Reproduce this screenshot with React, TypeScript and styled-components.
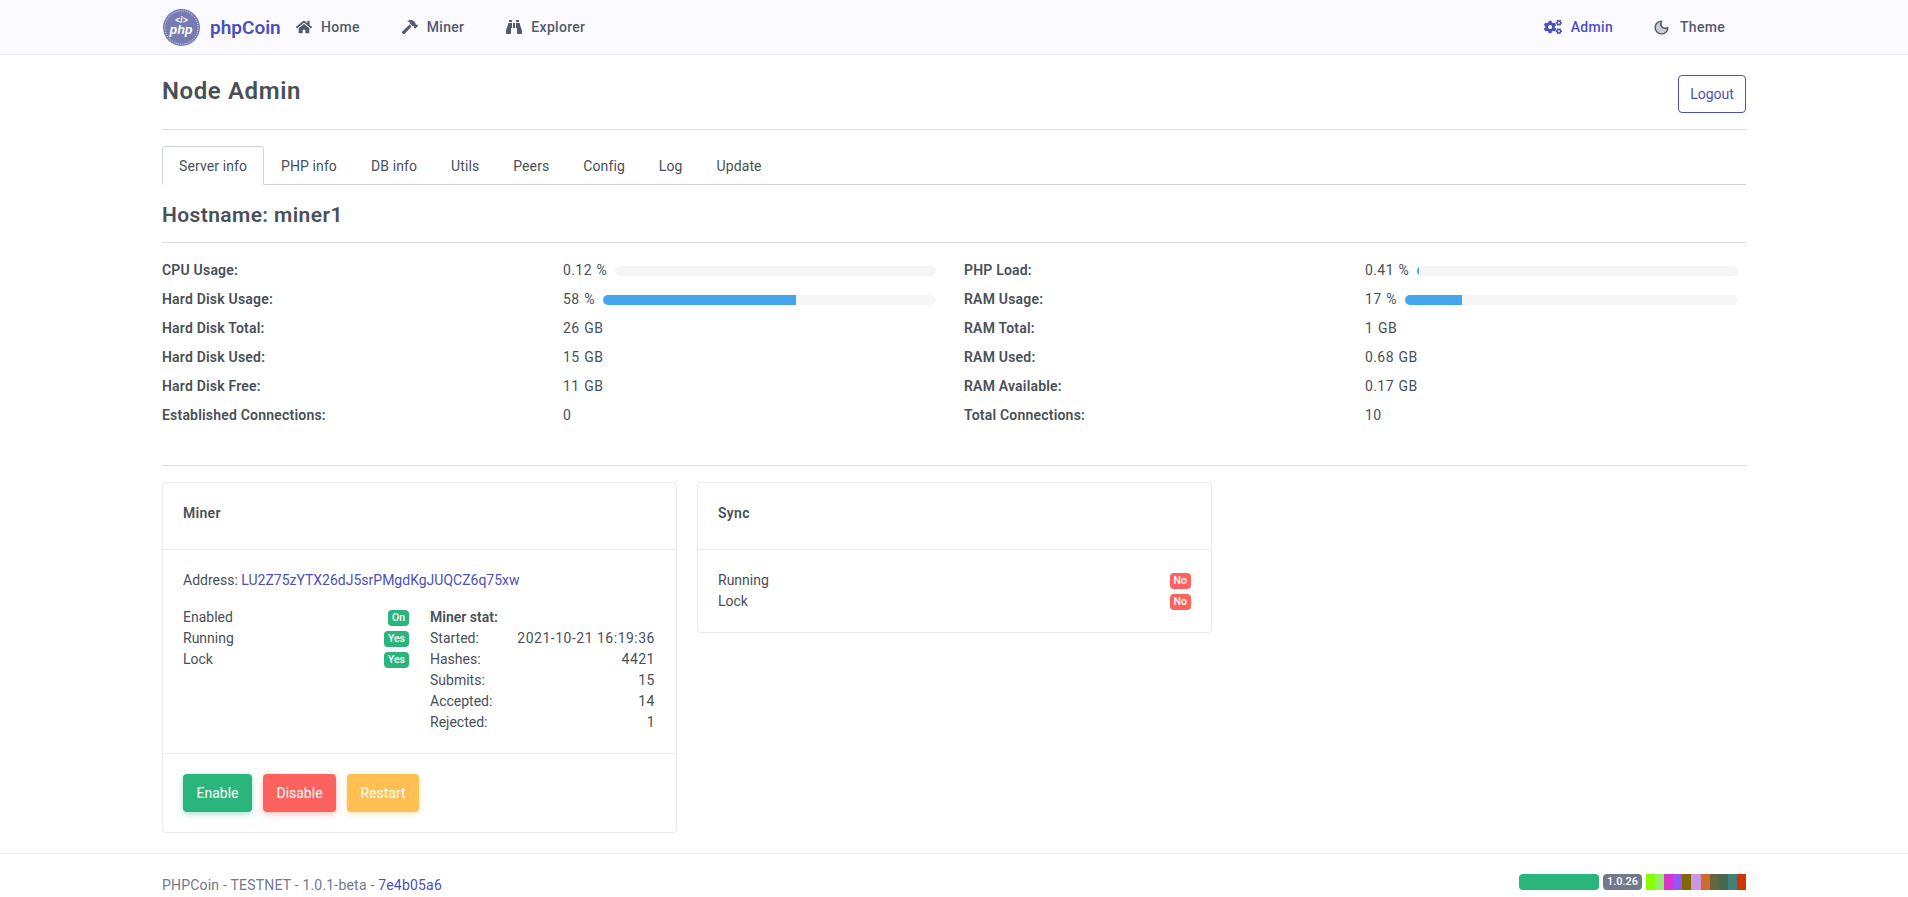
import React from "react";
import styled, { createGlobalStyle } from "styled-components";
import { FaHome, FaHammer, FaBinoculars, FaCogs } from "react-icons/fa";
import { Moon } from "lucide-react";

const GlobalStyle = createGlobalStyle`
  html, body {
    margin: 0;
    padding: 0;
    background: #fff;
    height: 100%;
    overflow: hidden;
  }
  body {
    font-family: Roboto, "Noto Sans", sans-serif;
    font-size: 14px;
    line-height: 21px;
    color: #495057;
  }
  * { box-sizing: border-box; }
`;

const Navbar = styled.nav`
  height: 55px;
  background: #fafaff;
  border-bottom: 1px solid #e9e9ef;
  padding: 0 183px 0 162px;
  display: flex;
  align-items: center;
  justify-content: space-between;
`;

const NavGroup = styled.div<{ $gap: number }>`
  display: flex;
  align-items: center;
  gap: ${(p) => p.$gap}px;
`;

const Brand = styled.a`
  width: 134px;
  margin-right: -42px;
  display: flex;
  align-items: center;
  gap: 10px;
  padding-left: 1px;
  font-size: 19px;
  font-weight: 600;
  color: #4c50bb;
`;

const NavItem = styled.a<{ $active?: boolean; $gap?: number; $icon?: number }>`
  display: flex;
  align-items: center;
  gap: ${(p) => p.$gap ?? 9}px;
  font-size: 14px;
  font-weight: 500;
  letter-spacing: 0.3px;
  color: ${(p) => (p.$active ? "#4c50bb" : "#545a6d")};
  svg { font-size: ${(p) => p.$icon ?? 16}px; }
`;

const Page = styled.main`
  padding: 0 162px;
`;

const Header = styled.div`
  height: 75px;
  padding-top: 20px;
  display: flex;
  justify-content: space-between;
  align-items: flex-start;
  border-bottom: 1px solid #dcdde1;
`;

const Title = styled.h2`
  margin: 1px 0 0;
  font-size: 24px;
  line-height: 30px;
  font-weight: 600;
  letter-spacing: 0.6px;
  color: #495057;
`;

const OutlineButton = styled.button`
  width: 68px;
  height: 38px;
  background: #fff;
  border: 1px solid #4c50bb;
  border-radius: 4px;
  color: #4c50bb;
  font: inherit;
  padding: 0;
`;

const Tabs = styled.div`
  margin-top: 16px;
  height: 39px;
  display: flex;
  border-bottom: 1px solid #ced4da;
`;

const Tab = styled.a<{ $active?: boolean }>`
  height: 39px;
  padding: 1px 16px 0;
  display: flex;
  align-items: center;
  letter-spacing: 0.1px;
  color: #495057;
  border: 1px solid ${(p) => (p.$active ? "#ced4da" : "transparent")};
  border-bottom: 1px solid ${(p) => (p.$active ? "#fff" : "transparent")};
  border-radius: 4px 4px 0 0;
`;

const Hostname = styled.h4`
  margin: 17px 0 0;
  padding-bottom: 14px;
  font-size: 21px;
  line-height: 26px;
  font-weight: 600;
  letter-spacing: 0.4px;
  border-bottom: 1px solid #dcdde1;
`;

const InfoGrid = styled.div`
  display: grid;
  grid-template-columns: 782px 782px;
  column-gap: 20px;
  padding: 13px 0 35px;
  border-bottom: 1px solid #dcdde1;
`;

const InfoColumn = styled.div``;

const InfoRow = styled.div`
  display: flex;
  height: 29px;
  align-items: center;
  padding-right: 8px;
`;

const InfoLabel = styled.div`
  width: 401px;
  flex: none;
  font-weight: 600;
  letter-spacing: 0.2px;
`;

const InfoValue = styled.div`
  flex: 1;
  display: flex;
  align-items: center;
  gap: 8px;
  letter-spacing: 0.4px;
  word-spacing: 0.8px;
`;

const Track = styled.div`
  flex: 1;
  height: 10px;
  background: #f6f6f6;
  border-radius: 5px;
  overflow: hidden;
`;

const Fill = styled.div`
  height: 100%;
  background: #45a5ee;
`;

const Cards = styled.div`
  display: flex;
  align-items: flex-start;
  gap: 20px;
  margin-top: 16px;
`;

const Card = styled.section`
  width: 515px;
  border: 1px solid #e9e9ef;
  border-radius: 4px;
  background: #fff;
`;

const CardHeader = styled.header`
  height: 67px;
  padding: 20px;
  border-bottom: 1px solid #e9e9ef;
  font-weight: 600;
  letter-spacing: 0.3px;
`;

const CardBody = styled.div`
  padding: 20px;
`;

const AddressLine = styled.div`
  margin-bottom: 16px;
`;

const Link = styled.a`
  color: #4c50bb;
`;

const StatusColumns = styled.div`
  display: grid;
  grid-template-columns: 226px 225px;
  column-gap: 21px;
`;

const StatusRow = styled.div`
  display: flex;
  justify-content: space-between;
  align-items: center;
  height: 21px;
`;

const StatLabel = styled.div<{ $strong?: boolean }>`
  font-weight: ${(p) => (p.$strong ? 600 : 400)};
`;

const StatValue = styled.div`
  letter-spacing: 0.5px;
`;

const Badge = styled.span<{ $tone: "green" | "red" }>`
  display: inline-block;
  padding: 0 4px;
  height: 16px;
  line-height: 16px;
  font-size: 10.5px;
  font-weight: 500;
  color: #fff;
  border-radius: 4px;
  background: ${(p) => (p.$tone === "green" ? "#2ab57d" : "#fd625e")};
`;

const CardFooter = styled.footer`
  padding: 20px;
  border-top: 1px solid #e9e9ef;
  display: flex;
  gap: 11px;
`;

const toneColors = {
  green: "#2ab57d",
  red: "#fd625e",
  yellow: "#ffbf53",
};

const ActionButton = styled.button<{ $tone: keyof typeof toneColors; $w: number }>`
  width: ${(p) => p.$w}px;
  height: 38px;
  padding: 0;
  border: none;
  border-radius: 4px;
  font: inherit;
  color: #fff;
  background: ${(p) => toneColors[p.$tone]};
  box-shadow: 0 2px 6px ${(p) => toneColors[p.$tone]}66;
`;

const Footer = styled.footer`
  margin-top: 20px;
  border-top: 1px solid #e9e9ef;
  padding: 20px 162px;
  display: flex;
  justify-content: space-between;
  align-items: flex-start;
  color: #74788d;
`;

const FooterText = styled.div`
  padding-top: 1px;
  letter-spacing: 0.2px;
`;

const Versions = styled.div`
  display: flex;
  align-items: center;
  gap: 4px;
`;

const NodeBar = styled.div`
  width: 80px;
  height: 16px;
  background: #2ab57d;
  border-radius: 4px;
`;

const VersionBadge = styled.span`
  height: 16px;
  width: 39px;
  text-align: center;
  line-height: 16px;
  font-size: 11px;
  font-weight: 500;
  background: #74788d;
  color: #fff;
  border-radius: 4px;
`;

const Swatches = styled.div`
  display: flex;
  width: 100px;
  height: 16px;
`;

const Swatch = styled.div<{ $color: string }>`
  flex: 1;
  background: ${(p) => p.$color};
`;

function Logo() {
  return (
    <svg width="37" height="37" viewBox="0 0 37 37">
      <circle cx="18.5" cy="18.5" r="18.5" fill="#777bb3" />
      <circle cx="18.5" cy="18.5" r="16.6" fill="none" stroke="#fff" strokeWidth="0.8" strokeDasharray="1 1.2" />
      <text x="18.5" y="14" textAnchor="middle" fontSize="8.5" fill="#fff" fontFamily="Liberation Sans, sans-serif">
        {"</>"}
      </text>
      <text x="18" y="25" textAnchor="middle" fontSize="12.5" fontWeight="700" fontStyle="italic" fill="#fff" fontFamily="Liberation Sans, sans-serif">
        php
      </text>
    </svg>
  );
}

const leftRows = [
  { label: "CPU Usage:", value: "0.12 %", bar: 0 },
  { label: "Hard Disk Usage:", value: "58 %", bar: 58 },
  { label: "Hard Disk Total:", value: "26 GB" },
  { label: "Hard Disk Used:", value: "15 GB" },
  { label: "Hard Disk Free:", value: "11 GB" },
  { label: "Established Connections:", value: "0" },
];

const rightRows = [
  { label: "PHP Load:", value: "0.41 %", bar: 0.6 },
  { label: "RAM Usage:", value: "17 %", bar: 17 },
  { label: "RAM Total:", value: "1 GB" },
  { label: "RAM Used:", value: "0.68 GB" },
  { label: "RAM Available:", value: "0.17 GB" },
  { label: "Total Connections:", value: "10" },
];

const swatches = [
  "#88ff00", "#96ef6f", "#d934cc", "#9655fa", "#846700", "#cd97e0",
  "#cd6c2e", "#656540", "#44694f", "#44807a", "#cc3700",
];

const tabs = ["Server info", "PHP info", "DB info", "Utils", "Peers", "Config", "Log", "Update"];

const minerStats = [
  ["Started:", "2021-10-21 16:19:36"],
  ["Hashes:", "4421"],
  ["Submits:", "15"],
  ["Accepted:", "14"],
  ["Rejected:", "1"],
];

function InfoList({ rows }: { rows: { label: string; value: string; bar?: number }[] }) {
  return (
    <InfoColumn>
      {rows.map((r) => (
        <InfoRow key={r.label}>
          <InfoLabel>{r.label}</InfoLabel>
          <InfoValue>
            {r.value}
            {r.bar !== undefined && (
              <Track>
                <Fill style={{ width: `${r.bar}%` }} />
              </Track>
            )}
          </InfoValue>
        </InfoRow>
      ))}
    </InfoColumn>
  );
}

export default function App() {
  return (
    <>
      <GlobalStyle />
      <Navbar>
        <NavGroup $gap={42}>
          <Brand>
            <Logo />
            phpCoin
          </Brand>
          <NavItem><FaHome />Home</NavItem>
          <NavItem><FaHammer />Miner</NavItem>
          <NavItem><FaBinoculars />Explorer</NavItem>
        </NavGroup>
        <NavGroup $gap={40}>
          <NavItem $active $icon={18}><FaCogs />Admin</NavItem>
          <NavItem $gap={10}>
            <Moon size={17} fill="rgba(116,120,141,0.35)" strokeWidth={2} />
            Theme
          </NavItem>
        </NavGroup>
      </Navbar>
      <Page>
        <Header>
          <Title>Node Admin</Title>
          <OutlineButton>Logout</OutlineButton>
        </Header>
        <Tabs>
          {tabs.map((t, i) => (
            <Tab key={t} $active={i === 0}>{t}</Tab>
          ))}
        </Tabs>
        <Hostname>Hostname: miner1</Hostname>
        <InfoGrid>
          <InfoList rows={leftRows} />
          <InfoList rows={rightRows} />
        </InfoGrid>
        <Cards>
          <Card>
            <CardHeader>Miner</CardHeader>
            <CardBody>
              <AddressLine>
                Address: <Link>LU2Z75zYTX26dJ5srPMgdKgJUQCZ6q75xw</Link>
              </AddressLine>
              <StatusColumns>
                <div>
                  <StatusRow>Enabled<Badge $tone="green">On</Badge></StatusRow>
                  <StatusRow>Running<Badge $tone="green">Yes</Badge></StatusRow>
                  <StatusRow>Lock<Badge $tone="green">Yes</Badge></StatusRow>
                </div>
                <div>
                  <StatusRow><StatLabel $strong>Miner stat:</StatLabel></StatusRow>
                  {minerStats.map(([k, v]) => (
                    <StatusRow key={k}><StatLabel>{k}</StatLabel><StatValue>{v}</StatValue></StatusRow>
                  ))}
                </div>
              </StatusColumns>
            </CardBody>
            <CardFooter>
              <ActionButton $tone="green" $w={69}>Enable</ActionButton>
              <ActionButton $tone="red" $w={73}>Disable</ActionButton>
              <ActionButton $tone="yellow" $w={72}>Restart</ActionButton>
            </CardFooter>
          </Card>
          <Card>
            <CardHeader>Sync</CardHeader>
            <CardBody>
              <StatusRow>Running<Badge $tone="red">No</Badge></StatusRow>
              <StatusRow>Lock<Badge $tone="red">No</Badge></StatusRow>
            </CardBody>
          </Card>
        </Cards>
      </Page>
      <Footer>
        <FooterText>
          PHPCoin - TESTNET - 1.0.1-beta - <Link>7e4b05a6</Link>
        </FooterText>
        <Versions>
          <NodeBar />
          <VersionBadge>1.0.26</VersionBadge>
          <Swatches>
            {swatches.map((c) => (
              <Swatch key={c} $color={c} />
            ))}
          </Swatches>
        </Versions>
      </Footer>
    </>
  );
}
